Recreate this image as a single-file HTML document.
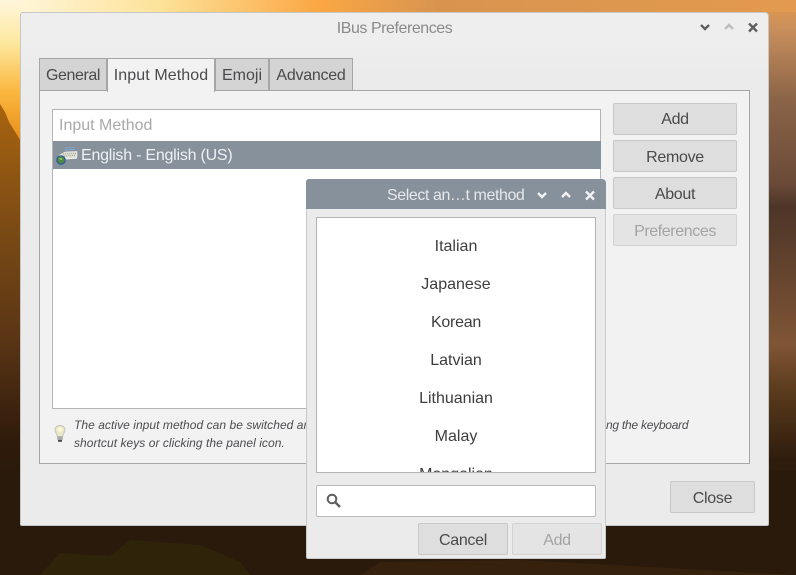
<!DOCTYPE html>
<html lang="en"><head><meta charset="utf-8"><title>IBus Preferences</title>
<style>
html,body{margin:0;padding:0}
body{width:796px;height:575px;overflow:hidden;position:relative;background:#2a1a0c;font-family:"Liberation Sans",sans-serif;font-size:16px;color:#4a4a4c}
div,span{position:absolute;box-sizing:border-box}
.t{white-space:nowrap;line-height:20px;text-align:center}
.win{background:#ebebeb;border:1px solid #c6c6c6;border-radius:3px 4px 2px 2px}
.tab{top:58px;height:33px;background:#d4d4d4;border:1px solid #a6a6a6;border-bottom:1px solid #a6a6a6}
.btn{background:#dedede;border:1px solid #c8c8c8;border-radius:2px;text-align:center;line-height:32px;white-space:nowrap;letter-spacing:-.3px}
.dis{background:#e4e4e4;color:#a3a3a3;border-color:#d2d2d2}
.li{left:0;width:278px;text-align:center;height:20px;line-height:20px;color:#3d3d3d;white-space:nowrap}
svg{position:absolute;overflow:visible}
</style></head><body>
<svg style="left:0;top:0" width="796" height="575" viewBox="0 0 796 575">
<defs>
<linearGradient id="bg" x1="0" y1="0" x2="0" y2="1">
<stop offset="0" stop-color="#e39a4e"/><stop offset=".05" stop-color="#c98f5c"/><stop offset=".17" stop-color="#8c6548"/><stop offset=".32" stop-color="#6a4a38"/><stop offset=".36" stop-color="#4d3528"/><stop offset=".6" stop-color="#7f5535"/><stop offset=".68" stop-color="#5a3b1c"/><stop offset=".8" stop-color="#2e1c0d"/><stop offset="1" stop-color="#2a1a0c"/></linearGradient>
<linearGradient id="sky" x1="0" y1="0" x2="0" y2="1">
<stop offset="0" stop-color="#fff6dc"/><stop offset=".3" stop-color="#fde9a0"/><stop offset=".65" stop-color="#fbb840"/><stop offset="1" stop-color="#e78f1c"/></linearGradient>
<linearGradient id="tree" x1="0" y1="0" x2="0" y2="1">
<stop offset="0" stop-color="#a86410"/><stop offset=".3" stop-color="#7a4a14"/><stop offset=".55" stop-color="#5b3615"/><stop offset=".8" stop-color="#2f1b0b"/><stop offset="1" stop-color="#241608"/></linearGradient>
<linearGradient id="top" x1="0" y1="0" x2="1" y2="0">
<stop offset="0" stop-color="#fff8e0"/><stop offset=".2" stop-color="#fde39a"/><stop offset=".4" stop-color="#fba744"/><stop offset=".55" stop-color="#d8944f"/><stop offset="1" stop-color="#e39a4e"/></linearGradient>
</defs>
<rect width="796" height="575" fill="url(#bg)"/>
<rect x="0" y="0" width="796" height="12" fill="url(#top)"/>
<rect x="0" y="0" width="22" height="140" fill="url(#sky)"/>
<path d="M0 104L5 112L9 122L14 130L19 138L20 140V526H0Z" fill="url(#tree)"/>
<rect x="0" y="470" width="796" height="105" fill="#2a1a0c"/>
<path d="M40 575L60 553L110 556L130 540L200 545L240 562L250 575Z" fill="#2f2409"/>
<path d="M360 575L380 562L520 560L796 575Z" fill="#36210d"/>
</svg>

<!-- main window -->
<div class="win" style="left:20px;top:12px;width:749px;height:514px;background:linear-gradient(#eeeeee 0,#eeeeee 30px,#ebebeb 60px)">
</div>
<div class="t" style="left:20px;top:17px;width:749px;color:#8a8a8a;letter-spacing:-.45px;padding-top:1px;line-height:21px">IBus Preferences</div>
<svg style="left:700px;top:22px" width="60" height="12" fill="none" stroke-width="2.4">
<path d="M1 3l4 4 4-4" stroke="#5f5f5f"/><path d="M25 7l4-4 4 4" stroke="#bdbdbd"/><path d="M49 1.500l8 8M57 1.500l-8 8" stroke="#5f5f5f"/></svg>

<!-- notebook panel -->
<div style="left:39px;top:90px;width:711px;height:374px;background:#f2f2f2;border:1px solid #a6a6a6"></div>
<div class="tab" style="left:39px;width:68px"></div>
<div class="t" style="left:39px;top:66px;width:68px;color:#4a4a4c;letter-spacing:-.4px">General</div>
<div class="tab" style="left:107px;width:108px;height:34px;background:#f2f2f2;border-bottom:0"></div>
<div class="t" style="left:107px;top:66px;width:108px;letter-spacing:.1px">Input Method</div>
<div class="tab" style="left:215px;width:54px"></div>
<div class="t" style="left:215px;top:66px;width:54px">Emoji</div>
<div class="tab" style="left:269px;width:84px"></div>
<div class="t" style="left:269px;top:66px;width:84px;letter-spacing:-.25px">Advanced</div>

<!-- list -->
<div style="left:52px;top:109px;width:549px;height:300px;background:#fff;border:1px solid #b4b4b4"></div>
<div class="t" style="left:59px;top:116px;color:#a9a9a9">Input Method</div>
<div style="left:53px;top:141px;width:548px;height:28px;background:#87919b"></div>
<div class="t" style="left:81px;top:146px;color:#eef0f2;letter-spacing:-.23px">English - English (US)</div>
<svg style="left:55px;top:146px" width="24" height="20" viewBox="0 0 24 20">
<path d="M10 2l10-.8M9 4l11-.6" stroke="#7fa6cf" stroke-width="1" fill="none"/>
<path d="M4 9.500l6-3.500 12-.5v5.500l-14 1z" fill="#dcdcd0" stroke="#f0f0ec" stroke-width=".6"/>
<path d="M8 8l13-.6M7 10l14-.6" stroke="#9a9a90" stroke-width=".8" stroke-dasharray="1 1"/>
<path d="M8 13l14-1" stroke="#f4f4f0" stroke-width="1.200"/>
<circle cx="6" cy="14" r="4.200" fill="#4c8a46" stroke="#2b5a9e" stroke-width="1.200"/>
<path d="M4 12h3v2h-2z" fill="#8cc060"/>
</svg>

<!-- hint -->
<svg style="left:52px;top:424px" width="16" height="20" viewBox="0 0 16 20">
<path d="M8 1.500c3.200 0 5 2.300 5 4.500 0 2.500-2.200 3.500-2.300 6.500H5.300C5.200 9.500 3 8.500 3 6c0-2.200 1.800-4.500 5-4.500z" fill="#ece9c8" stroke="#c4c4bc" stroke-width="1"/>
<circle cx="8" cy="5.500" r="2.300" fill="#fbf8d8"/>
<rect x="5.300" y="12.500" width="5.400" height="3.500" fill="#a8a8a8"/>
<rect x="6" y="16" width="4" height="1.800" fill="#4c4c4c"/>
</svg>
<div class="t" style="left:74px;top:415px;font-size:12px;font-style:italic;color:#4c4c50;text-align:left;width:232px;overflow:hidden;letter-spacing:.05px">The active input method can be switched around</div>
<div class="t" style="left:606px;top:415px;width:90px;font-size:12px;font-style:italic;color:#4c4c50;text-align:left;overflow:hidden;letter-spacing:-.25px">ng the keyboard</div>
<div class="t" style="left:74px;top:433px;font-size:12px;font-style:italic;color:#4c4c50;letter-spacing:.05px">shortcut keys or clicking the panel icon.</div>

<!-- right buttons -->
<div class="btn" style="left:613px;top:103px;width:124px;height:32px">Add</div>
<div class="btn" style="left:613px;top:140px;width:124px;height:32px;line-height:33px">Remove</div>
<div class="btn" style="left:613px;top:177px;width:124px;height:32px;line-height:33px">About</div>
<div class="btn dis" style="left:613px;top:214px;width:124px;height:32px;letter-spacing:-.4px;line-height:33px">Preferences</div>
<div class="btn" style="left:670px;top:481px;width:85px;height:32px;line-height:33px">Close</div>

<!-- dialog -->
<div class="win" style="left:306px;top:179px;width:300px;height:380px;border-color:#c8c8c8"></div>
<div style="left:306px;top:179px;width:300px;height:30px;background:#87919b;border-radius:3px 4px 0 0"></div>
<div class="t" style="left:387px;top:186px;color:#e6e8ea;letter-spacing:-.42px">Select an…t method</div>
<svg style="left:537px;top:190px" width="60" height="12" fill="none" stroke="#f2f3f4" stroke-width="2.400">
<path d="M1 3l4 4 4-4"/><path d="M25 7l4-4 4 4"/><path d="M49 1.500l8 8M57 1.500l-8 8"/></svg>

<div style="left:316px;top:217px;width:280px;height:256px;background:#fff;border:1px solid #b4b4b4;overflow:hidden">
<div class="li" style="top:19px">Italian</div>
<div class="li" style="top:57px">Japanese</div>
<div class="li" style="top:95px;letter-spacing:-.25px">Korean</div>
<div class="li" style="top:133px">Latvian</div>
<div class="li" style="top:171px">Lithuanian</div>
<div class="li" style="top:209px">Malay</div>
<div class="li" style="top:247px">Mongolian</div>
</div>

<div style="left:316px;top:485px;width:280px;height:32px;background:#fff;border:1px solid #bcbcbc;border-radius:2px"></div>
<svg style="left:326px;top:493px" width="16" height="16" fill="none" stroke="#5e5e5e">
<circle cx="6" cy="6" r="4.300" stroke-width="2"/><path d="M9.500 9.500L14 14" stroke-width="2.400"/></svg>

<div class="btn" style="left:418px;top:523px;width:90px;height:32px;line-height:33px">Cancel</div>
<div class="btn dis" style="left:512px;top:523px;width:90px;height:32px;line-height:33px">Add</div>
</body></html>
